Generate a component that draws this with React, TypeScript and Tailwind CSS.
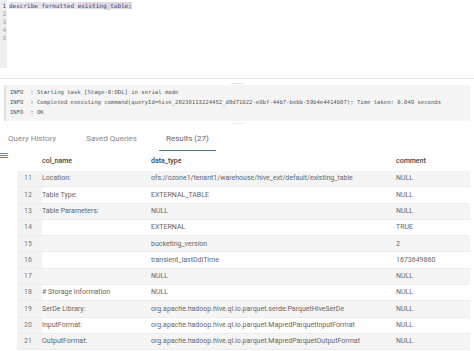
import React from 'react';

const rows: [number, string, string, string][] = [
    [11, 'Location:', 'ofs://ozone1/tenant1/warehouse/hive_ext/default/existing_table', 'NULL'],
    [12, 'Table Type:', 'EXTERNAL_TABLE', 'NULL'],
    [13, 'Table Parameters:', 'NULL', 'NULL'],
    [14, '', 'EXTERNAL', 'TRUE'],
    [15, '', 'bucketing_version', '2'],
    [16, '', 'transient_lastDdlTime', '1673649860'],
    [17, '', 'NULL', 'NULL'],
    [18, '# Storage Information', 'NULL', 'NULL'],
    [19, 'SerDe Library:', 'org.apache.hadoop.hive.ql.io.parquet.serde.ParquetHiveSerDe', 'NULL'],
    [20, 'InputFormat:', 'org.apache.hadoop.hive.ql.io.parquet.MapredParquetInputFormat', 'NULL'],
    [21, 'OutputFormat:', 'org.apache.hadoop.hive.ql.io.parquet.MapredParquetOutputFormat', 'NULL'],
];

const logs = [
    'INFO  : Starting task [Stage-0:DDL] in serial mode',
    'INFO  : Completed executing command(queryId=hive_20230113224452_d0d71022-e8bf-44b7-bebb-59b4e4414b07); Time taken: 0.049 seconds',
    'INFO  : OK',
];

const mono = { fontFamily: '"DejaVu Sans Mono", "Liberation Mono", monospace' };

export default function App() {
    return (
        <div className="w-[474px] h-[351px] overflow-hidden bg-white" style={{ fontFamily: 'Roboto, "Noto Sans", sans-serif' }}>
            {/* editor */}
            <div className="flex h-[68px]" style={mono}>
                <div className="w-[7px] bg-[#eeeeee] text-[6px] leading-[8px] text-[#999] pt-[2px] text-right pr-[1px]">
                    <div className="text-[#555]">1</div>
                    <div>2</div>
                    <div>3</div>
                    <div>4</div>
                    <div>5</div>
                </div>
                <div className="pl-[2px] pt-[2px] text-[6px] leading-[8px] text-[#4a4a7a]">
                    <span className="bg-[#e8e4f0]">describe formatted </span>
                    <span className="bg-[#e0d8e0]">existing_table;</span>
                </div>
            </div>

            {/* splitter */}
            <div className="mt-[10px] h-[1px] bg-[#e6e6e6]" />
            <div className="flex justify-center pt-[4px]">
                <div className="w-[12px] h-[1px] bg-[#e4e4e4]" />
            </div>

            {/* log */}
            <div className="mx-[4px] mt-[1px] h-[36px] bg-[#f5f5f5] border-l-2 border-[#e0e0e0] pl-[4px] pt-[2px] text-[5.6px] leading-[10px] text-[#555] whitespace-pre" style={mono}>
                {logs.map((l) => (
                    <div key={l}>{l}</div>
                ))}
            </div>
            <div className="flex justify-center pt-[2px]">
                <div className="w-[12px] h-[1px] bg-[#ececec]" />
            </div>

            {/* tabs */}
            <div className="flex items-end h-[27px] pl-[8px] text-[8px] text-[#888]">
                <div className="pb-[6px] pr-[30px]">Query History</div>
                <div className="pb-[6px] pr-[22px]">Saved Queries</div>
                <div className="pb-[5px] px-[7px] text-[#666] border-b-[1.5px] border-[#4d7a96]">Results (27)</div>
            </div>

            {/* table */}
            <div className="flex mt-[1px]">
                <div className="w-[17px] pt-[1px]">
                    <svg width="8" height="5" viewBox="0 0 8 5" className="block">
                        <rect x="0" y="0" width="8" height="1" fill="#4a8ac4" />
                        <rect x="0" y="2" width="8" height="1" fill="#4a8ac4" />
                        <rect x="0" y="4" width="8" height="1" fill="#4a8ac4" />
                    </svg>
                </div>
                <div className="w-[453px] text-[7px] text-[#666]">
                    <div className="flex h-[19px] items-center font-medium text-[#444]">
                        <div className="w-[25px]" />
                        <div className="w-[109px]">col_name</div>
                        <div className="w-[245px]">data_type</div>
                        <div>comment</div>
                    </div>
                    {rows.map(([n, name, type, comment], i) => (
                        <div
                            key={n}
                            className={`flex h-[16.3px] items-center border-b border-[#ececec] ${i % 2 === 0 ? 'bg-[#f5f5f5]' : 'bg-white'}`}
                        >
                            <div className="w-[25px] h-full flex items-center pl-[7px] bg-[#f3f3f3] text-[#777]">{n}</div>
                            <div className="w-[109px]">{name}</div>
                            <div className="w-[245px] whitespace-nowrap">{type}</div>
                            <div>{comment}</div>
                        </div>
                    ))}
                </div>
            </div>
        </div>
    );
}
